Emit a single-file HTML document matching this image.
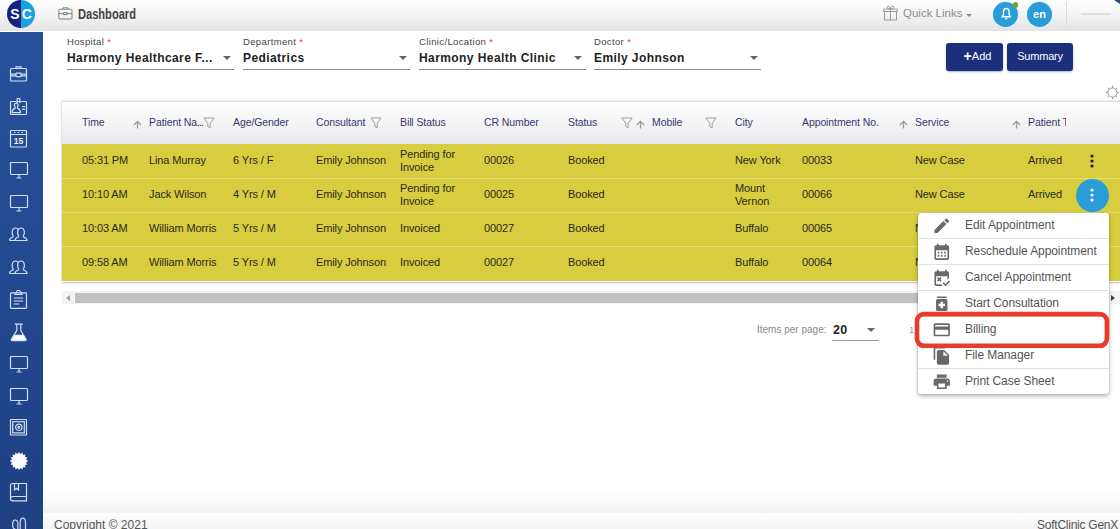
<!DOCTYPE html>
<html lang="en">
<head>
<meta charset="utf-8">
<title>Dashboard</title>
<style>
*{box-sizing:border-box;margin:0;padding:0}
html,body{width:1120px;height:529px;overflow:hidden;background:#fff;font-family:"Liberation Sans",sans-serif;color:#222}
.abs{position:absolute}
#hdr{left:0;top:0;width:1120px;height:31px;background:linear-gradient(#ffffff 0%,#f4f4f4 45%,#e4e4e4 100%)}
#side{left:0;top:32px;width:43px;height:497px;background:linear-gradient(#26509b,#1f4184)}
#logo{left:7px;top:0;width:28px;height:28px;border-radius:50%;background:linear-gradient(90deg,#17227f 0,#17227f 50%,#17a4dc 50%,#17a4dc 100%);color:#fff;font-weight:bold;font-size:14px;line-height:28px;text-align:center;letter-spacing:2.2px;padding-left:2.5px}
#title{left:78px;top:5px;font-size:14.5px;font-weight:bold;color:#444;transform:scaleX(.765);transform-origin:0 50%;white-space:nowrap;line-height:18px}
.ql{left:903px;top:5px;font-size:11.5px;color:#8c8c8c;line-height:16px;white-space:nowrap}
.circ{width:25px;height:25px;border-radius:50%;background:#2a9dd8;box-shadow:0 0 0 1px #d8f0fa}
.lbl{font-size:9.5px;letter-spacing:.36px;color:#444;line-height:12px;white-space:nowrap}
.lbl i{color:#d2453b;font-style:normal}
.val{font-size:12px;font-weight:bold;color:#1e1e1e;line-height:16px;white-space:nowrap;letter-spacing:.42px}
.ul{height:1px;background:#8a8a8a}
.car{width:0;height:0;border-left:4px solid transparent;border-right:4px solid transparent;border-top:4px solid #666}
.btn{top:43px;height:28px;border-radius:3px;background:#1b2f7c;color:#fff;font-size:11px;line-height:26px;text-align:center;box-shadow:0 1px 2px rgba(0,0,0,.3)}
#tbl{left:62px;top:101px;width:1058px;height:181px;background:#fff;box-shadow:0 1px 2px rgba(0,0,0,.22),0 0 1px rgba(0,0,0,.25)}
#th{left:62px;top:101px;width:1058px;height:43px;border-top:1px solid #dedede;background:linear-gradient(#fefefe 0%,#f5f5f7 45%,#e9e9ed 100%)}
.h{top:116px;font-size:10.5px;letter-spacing:-.1px;color:#36386f;line-height:12px;white-space:nowrap}
.row{left:62px;width:1058px;height:34px;background:#d7cd3f;border-top:1px solid #e4dd7e}
.c{font-size:11px;letter-spacing:-.12px;color:#2a2a20;line-height:13px;white-space:nowrap}
#menu{left:918px;top:213px;width:191px;height:181px;background:#fff;border-radius:3px;box-shadow:0 2px 4px rgba(0,0,0,.3),0 0 2px rgba(0,0,0,.2)}
.mi{left:0;width:191px;height:26px;border-bottom:1px solid #e2e2e2}
.mi span{position:absolute;left:47px;top:5px;font-size:12px;letter-spacing:-.08px;color:#555;line-height:14px;white-space:nowrap}
.mi svg{position:absolute;left:13.7px;top:2.5px;width:19.5px;height:19.5px;fill:#696969}
#ftr{left:43px;top:513px;width:1077px;height:16px;background:linear-gradient(#fdfdfd,#f4f4f4)}
#fsh{left:43px;top:490px;width:1077px;height:23px;background:linear-gradient(rgba(0,0,0,0),rgba(0,0,0,.02) 50%,rgba(0,0,0,.055))}
.ft{top:518px;font-size:12px;color:#555;line-height:14px;white-space:nowrap}
.sb{fill:none;stroke:#d3def2;stroke-width:1.2;overflow:visible}
</style>
</head>
<body>
<div id="hdr" class="abs"></div>
<div id="side" class="abs"></div>
<div id="logo" class="abs">SC</div>

<!-- sidebar icons -->
<svg class="abs sb" style="left:9px;top:65px;width:19px;height:18px" viewBox="0 0 19 18" ><rect x="1.500" y="3.500" width="16" height="12.500" rx="1"/><path d="M7 3.500V1.800h5v1.700M1.500 9.200h5.500M12 9.200h5.500M1.500 10.800h5.500M12 10.800h5.500"/><rect x="7" y="8.200" width="5" height="3.400" rx=".5"/></svg>
<svg class="abs sb" style="left:9px;top:97px;width:19px;height:20px" viewBox="0 0 19 20" ><rect x="1.500" y="4.500" width="16" height="13" rx=".8"/><path d="M8.200 6V1.500h2.600V6M13 9.500h3M13 12.200h3"/><path transform="translate(-2.400,-6.200) scale(1.380)" stroke-width=".9" d="M4 15.800c0-2 .8-2.600 2-3 .3-.2.300-.8 0-1.200-.6-.7-.6-2.600 1-2.600s1.600 1.900 1 2.600c-.3.400-.3 1 0 1.200 1.200.4 2 1 2 3z"/></svg>
<svg class="abs sb" style="left:9px;top:129px;width:19px;height:20px" viewBox="0 0 19 20" ><rect x="1.500" y="1.500" width="16" height="16.500" rx=".8"/><path d="M1.500 5.500h16M5 3.500h1.500M8.800 3.500h1.500M12.500 3.500H14" /><text x="9.500" y="15" text-anchor="middle" font-family="Liberation Sans, sans-serif" font-weight="bold" font-size="8.500" fill="#e6ecf7" stroke="none">15</text></svg>
<svg class="abs sb" style="left:9px;top:161px;width:20px;height:19px" viewBox="0 0 20 19" ><rect x="1.500" y="1.500" width="17" height="12" rx="1"/><path d="M10 13.500v3.300M7.500 17h5"/></svg>
<svg class="abs sb" style="left:9px;top:194px;width:20px;height:19px" viewBox="0 0 20 19" ><rect x="1.500" y="1.500" width="17" height="12" rx="1"/><path d="M10 13.500v3.300M7.500 17h5"/></svg>
<svg class="abs sb" style="left:9px;top:355px;width:20px;height:19px" viewBox="0 0 20 19" ><rect x="1.500" y="1.500" width="17" height="12" rx="1"/><path d="M10 13.500v3.300M7.500 17h5"/></svg>
<svg class="abs sb" style="left:9px;top:387px;width:20px;height:19px" viewBox="0 0 20 19" ><rect x="1.500" y="1.500" width="17" height="12" rx="1"/><path d="M10 13.500v3.300M7.500 17h5"/></svg>
<svg class="abs sb" style="left:8px;top:226px;width:21px;height:17px" viewBox="0 0 21 17" ><path d="M1.500 14.500c0-2.200 1.400-2.800 3.300-3.500.5-.3.500-1.100.1-1.600C4 8.200 4 6.800 4.200 5.600 4.500 3.500 5.600 2 7.500 2c1.300 0 2.200.7 2.700 1.700"/><path d="M7 14.500c0-2.200 1.400-2.800 3.300-3.500.5-.3.500-1.100.1-1.600-.9-1.200-.9-2.600-.7-3.800.3-2.100 1.400-3.600 3.300-3.600s3 1.500 3.300 3.600c.2 1.200.2 2.600-.7 3.800-.4.5-.4 1.300.100 1.600 1.900.7 3.300 1.300 3.300 3.500zM1.500 14.500H7"/></svg>
<svg class="abs sb" style="left:8px;top:259px;width:21px;height:17px" viewBox="0 0 21 17" ><path d="M1.500 14.500c0-2.200 1.400-2.800 3.300-3.500.5-.3.500-1.100.1-1.600C4 8.200 4 6.800 4.200 5.600 4.500 3.500 5.600 2 7.500 2c1.300 0 2.200.7 2.700 1.700"/><path d="M7 14.500c0-2.200 1.400-2.800 3.300-3.500.5-.3.500-1.100.1-1.600-.9-1.200-.9-2.600-.7-3.800.3-2.100 1.400-3.600 3.300-3.600s3 1.500 3.300 3.600c.2 1.200.2 2.600-.7 3.800-.4.5-.4 1.300.100 1.600 1.900.7 3.300 1.300 3.300 3.500zM1.500 14.500H7"/></svg>
<svg class="abs sb" style="left:9px;top:289px;width:19px;height:21px" viewBox="0 0 19 21" ><rect x="1.500" y="3.800" width="16" height="15.500" rx=".8"/><path d="M6 5.500L8.500 1.500h2L13 5.500zM4.800 9h9.400M4.800 12h9.400M4.800 15h5.500"/></svg>
<svg class="abs sb" style="left:9px;top:322px;width:20px;height:21px" viewBox="0 0 20 21" stroke-width="2" stroke="#fbfcff"><path d="M5.800 2.200h8M7.800 2.200v6.300L2.400 17c-.5.900 0 1.700 1 1.700h12.500c1 0 1.500-.8 1-1.700L11.800 8.500V2.200"/><path d="M5.500 12.700h8.600l3.300 5.300H2.400z" fill="#fbfcff" stroke="none"/></svg>
<svg class="abs sb" style="left:9px;top:418px;width:19px;height:19px" viewBox="0 0 19 19" ><rect x="1.500" y="1.500" width="16" height="15.500" rx=".6"/><rect x="3.700" y="3.700" width="11.600" height="11.200"/><circle cx="9.800" cy="9.300" r="3.200"/><circle cx="9.800" cy="9.300" r="1"/><path d="M3.700 6.500v1.600M3.700 10.500v1.600"/></svg>
<svg class="abs sb" style="left:8.600px;top:451.300px;width:20px;height:20px" viewBox="0 0 20 20" ><polygon points="10.00,19.10 8.60,17.06 6.52,18.41 6.00,15.99 3.57,16.43 4.01,14.00 1.59,13.48 2.94,11.40 0.90,10.00 2.94,8.60 1.59,6.52 4.01,6.00 3.57,3.57 6.00,4.01 6.52,1.59 8.60,2.94 10.00,0.90 11.40,2.94 13.48,1.59 14.00,4.01 16.43,3.57 15.99,6.00 18.41,6.52 17.06,8.60 19.10,10.00 17.06,11.40 18.41,13.48 15.99,14.00 16.43,16.43 14.00,15.99 13.48,18.41 11.40,17.06" fill="#fbfcff" stroke="none"/></svg>
<svg class="abs sb" style="left:9px;top:482px;width:19px;height:20px" viewBox="0 0 19 20" ><path d="M17.500 14.500H4c-1.400 0-2.500 1-2.500 2.200S2.600 18.800 4 18.800h13.500V1.500H3.500c-1.100 0-2 .9-2 2v13.200M5.500 1.500v6.500l2-1.800 2 1.800V1.500"/></svg>
<svg class="abs sb" style="left:11px;top:516px;width:16px;height:14px" viewBox="0 0 16 14"><path d="M6.800 13V7.200c0-1.800-1-3.200-2.500-3.200S1.600 5.600 1.600 8.500s1.100 4.500 2.700 4.500M9.200 13V7c0-2.700 1-4.800 2.600-4.800s2.700 2.100 2.700 4.800v6"/></svg>

<!-- header -->
<svg class="abs" style="left:58px;top:7px;width:15px;height:13px" viewBox="0 0 15 13" fill="none" stroke="#808080" stroke-width="1"><rect x=".8" y="2.2" width="13.2" height="9.8" rx="1.2"/><path d="M5 2.2V.8h5v1.4M.8 6.6h5M9 6.6h5"/><rect x="5.8" y="5.6" width="3.2" height="2" /></svg>
<div id="title" class="abs">Dashboard</div>

<svg class="abs" style="left:883px;top:5px;width:15px;height:16px" viewBox="0 0 15 16" fill="none" stroke="#929292" stroke-width=".9"><rect x="1.5" y="6.5" width="12" height="8.5"/><rect x=".8" y="4" width="13.4" height="2.5"/><path d="M7.5 4v11M7.500 4C5 4 3.500 2.800 4.300 1.600 5.200.5 7 1.500 7.500 4zM7.500 4c2.500 0 4-1.200 3.200-2.400C9.800.5 8 1.500 7.500 4z"/></svg>
<div class="abs ql">Quick Links</div>
<div class="abs" style="left:966px;top:14px;width:0;height:0;border-left:3.5px solid transparent;border-right:3.5px solid transparent;border-top:3.5px solid #888"></div>
<div class="abs circ" style="left:993px;top:2px"></div>
<svg class="abs" style="left:1000.7px;top:6.800px;width:10.600px;height:13.600px" viewBox="0 0 12 14" preserveAspectRatio="none" fill="none" stroke="#fff" stroke-width="1.5"><path d="M6 1.600C3.800 1.600 2.800 3.400 2.800 5.400V8L1.500 10h9L9.200 8V5.400C9.200 3.400 8.200 1.600 6 1.600z"/><path d="M4.800 12h2.400" stroke-width="1.400"/></svg>
<div class="abs" style="left:1012.8px;top:2.4px;width:5.2px;height:5.2px;border-radius:50%;background:#7a9a3c"></div>
<div class="abs circ" style="left:1027px;top:2px;color:#fff;font-size:11px;font-weight:bold;text-align:center;line-height:24px">en</div>
<div class="abs" style="left:1066px;top:2px;width:1px;height:25px;background:#dcdcdc"></div>
<div class="abs" style="left:1081px;top:13px;width:30px;height:2px;background:#dedede"></div>
<div class="abs" style="left:1114px;top:0;width:0;height:0;border-left:6px solid transparent;border-top:4px solid #27497f"></div>

<!-- filters -->
<div class="abs lbl" style="left:67px;top:36px">Hospital <i>*</i></div>
<div class="abs val" style="left:67px;top:50px">Harmony Healthcare F...</div>
<div class="abs car" style="left:223px;top:55.5px"></div>
<div class="abs ul" style="left:67px;top:69px;width:167px"></div>

<div class="abs lbl" style="left:243px;top:36px">Department <i>*</i></div>
<div class="abs val" style="left:243px;top:50px">Pediatrics</div>
<div class="abs car" style="left:399px;top:55.5px"></div>
<div class="abs ul" style="left:243px;top:69px;width:167px"></div>

<div class="abs lbl" style="left:419px;top:36px">Clinic/Location <i>*</i></div>
<div class="abs val" style="left:419px;top:50px">Harmony Health Clinic</div>
<div class="abs car" style="left:574px;top:55.5px"></div>
<div class="abs ul" style="left:419px;top:69px;width:167px"></div>

<div class="abs lbl" style="left:594px;top:36px">Doctor <i>*</i></div>
<div class="abs val" style="left:594px;top:50px">Emily Johnson</div>
<div class="abs car" style="left:750px;top:55.5px"></div>
<div class="abs ul" style="left:594px;top:69px;width:167px"></div>

<div class="abs btn" style="left:946px;width:57px;padding-left:6px"><b style="font-size:14px;line-height:20px;vertical-align:-1px">+</b>Add</div>
<div class="abs btn" style="left:1007px;width:66px;letter-spacing:-.2px">Summary</div>

<!-- gear -->
<svg class="abs" style="left:1105px;top:85px;width:15px;height:15px" viewBox="0 0 15 15" fill="none" stroke="#9a9a9a" stroke-width="1"><circle cx="7.5" cy="7.5" r="4.600"/><path d="M7.500.8v2M7.500 12.200v2M.8 7.500h2M12.200 7.500h2M2.800 2.800l1.400 1.400M10.800 10.800l1.400 1.400M2.800 12.200l1.400-1.400M10.800 4.200l1.400-1.400"/></svg>

<!-- table -->
<div id="tbl" class="abs"></div>
<div id="th" class="abs"></div>
<div class="abs h" style="left:82px">Time</div>
<div class="abs h" style="left:149px">Patient Na<span style="letter-spacing:-.9px">...</span></div>
<div class="abs h" style="left:233px">Age/Gender</div>
<div class="abs h" style="left:316px">Consultant</div>
<div class="abs h" style="left:400px">Bill Status</div>
<div class="abs h" style="left:484px">CR Number</div>
<div class="abs h" style="left:568px">Status</div>
<div class="abs h" style="left:652px">Mobile</div>
<div class="abs h" style="left:735px">City</div>
<div class="abs h" style="left:802px">Appointment No.</div>
<div class="abs h" style="left:915px">Service</div>
<div class="abs h" style="left:1028px;width:38px;overflow:hidden">Patient Type</div>

<div class="abs row" style="top:144px;border-top:0"></div>
<div class="abs row" style="top:178px"></div>
<div class="abs row" style="top:212px"></div>
<div class="abs row" style="top:246px;height:35px"></div>

<div class="abs c" style="left:82px;top:154px">05:31 PM</div>
<div class="abs c" style="left:149px;top:154px">Lina Murray</div>
<div class="abs c" style="left:233px;top:154px">6 Yrs / F</div>
<div class="abs c" style="left:316px;top:154px">Emily Johnson</div>
<div class="abs c" style="left:400px;top:148px">Pending for<br>Invoice</div>
<div class="abs c" style="left:484px;top:154px">00026</div>
<div class="abs c" style="left:568px;top:154px">Booked</div>
<div class="abs c" style="left:735px;top:154px">New York</div>
<div class="abs c" style="left:802px;top:154px">00033</div>
<div class="abs c" style="left:915px;top:154px">New Case</div>
<div class="abs c" style="left:1028px;top:154px">Arrived</div>
<div class="abs c" style="left:82px;top:188px">10:10 AM</div>
<div class="abs c" style="left:149px;top:188px">Jack Wilson</div>
<div class="abs c" style="left:233px;top:188px">4 Yrs / M</div>
<div class="abs c" style="left:316px;top:188px">Emily Johnson</div>
<div class="abs c" style="left:400px;top:182px">Pending for<br>Invoice</div>
<div class="abs c" style="left:484px;top:188px">00025</div>
<div class="abs c" style="left:568px;top:188px">Booked</div>
<div class="abs c" style="left:735px;top:182px">Mount<br>Vernon</div>
<div class="abs c" style="left:802px;top:188px">00066</div>
<div class="abs c" style="left:915px;top:188px">New Case</div>
<div class="abs c" style="left:1028px;top:188px">Arrived</div>
<div class="abs c" style="left:82px;top:222px">10:03 AM</div>
<div class="abs c" style="left:149px;top:222px">William Morris</div>
<div class="abs c" style="left:233px;top:222px">5 Yrs / M</div>
<div class="abs c" style="left:316px;top:222px">Emily Johnson</div>
<div class="abs c" style="left:400px;top:222px">Invoiced</div>
<div class="abs c" style="left:484px;top:222px">00027</div>
<div class="abs c" style="left:568px;top:222px">Booked</div>
<div class="abs c" style="left:735px;top:222px">Buffalo</div>
<div class="abs c" style="left:802px;top:222px">00065</div>
<div class="abs c" style="left:915px;top:222px">New Case</div>
<div class="abs c" style="left:1028px;top:222px">Arrived</div>
<div class="abs c" style="left:82px;top:256px">09:58 AM</div>
<div class="abs c" style="left:149px;top:256px">William Morris</div>
<div class="abs c" style="left:233px;top:256px">5 Yrs / M</div>
<div class="abs c" style="left:316px;top:256px">Emily Johnson</div>
<div class="abs c" style="left:400px;top:256px">Invoiced</div>
<div class="abs c" style="left:484px;top:256px">00027</div>
<div class="abs c" style="left:568px;top:256px">Booked</div>
<div class="abs c" style="left:735px;top:256px">Buffalo</div>
<div class="abs c" style="left:802px;top:256px">00064</div>
<div class="abs c" style="left:915px;top:256px">New Case</div>
<div class="abs c" style="left:1028px;top:256px">Arrived</div>
<svg class="abs" style="left:132.5px;top:120px;width:9px;height:9px" viewBox="0 0 9 9" fill="none" stroke="#999" stroke-width="1.3"><path d="M4.500 8.600V1.400M.9 5l3.600-3.600L8.100 5"/></svg>
<svg class="abs" style="left:635.5px;top:120px;width:9px;height:9px" viewBox="0 0 9 9" fill="none" stroke="#999" stroke-width="1.3"><path d="M4.500 8.600V1.400M.9 5l3.600-3.600L8.100 5"/></svg>
<svg class="abs" style="left:898.5px;top:120px;width:9px;height:9px" viewBox="0 0 9 9" fill="none" stroke="#999" stroke-width="1.3"><path d="M4.500 8.600V1.400M.9 5l3.600-3.600L8.100 5"/></svg>
<svg class="abs" style="left:1011.5px;top:120px;width:9px;height:9px" viewBox="0 0 9 9" fill="none" stroke="#999" stroke-width="1.3"><path d="M4.500 8.600V1.400M.9 5l3.600-3.600L8.100 5"/></svg>
<svg class="abs" style="left:203px;top:117px;width:12px;height:12px" viewBox="0 0 12 12" fill="none" stroke="#a0a0a0" stroke-width="1"><path d="M.8 1h10.400L7.200 6.200v4.600L4.800 9.600V6.200z"/></svg>
<svg class="abs" style="left:370px;top:117px;width:12px;height:12px" viewBox="0 0 12 12" fill="none" stroke="#a0a0a0" stroke-width="1"><path d="M.8 1h10.400L7.200 6.200v4.600L4.800 9.600V6.200z"/></svg>
<svg class="abs" style="left:621px;top:117px;width:12px;height:12px" viewBox="0 0 12 12" fill="none" stroke="#a0a0a0" stroke-width="1"><path d="M.8 1h10.400L7.200 6.200v4.600L4.800 9.600V6.200z"/></svg>
<svg class="abs" style="left:705px;top:117px;width:12px;height:12px" viewBox="0 0 12 12" fill="none" stroke="#a0a0a0" stroke-width="1"><path d="M.8 1h10.400L7.200 6.200v4.600L4.800 9.600V6.200z"/></svg>
<svg class="abs" style="left:1088px;top:153px;width:8px;height:16px" viewBox="0 0 8 16" fill="#1e1e1e"><circle cx="4" cy="3" r="1.600"/><circle cx="4" cy="8" r="1.600"/><circle cx="4" cy="13" r="1.600"/></svg>
<div class="abs" style="left:1075.5px;top:178.5px;width:33px;height:33px;border-radius:50%;background:#2a9dd8"></div>
<svg class="abs" style="left:1088px;top:187px;width:8px;height:16px" viewBox="0 0 8 16" fill="#fff"><circle cx="4" cy="3" r="1.600"/><circle cx="4" cy="8" r="1.600"/><circle cx="4" cy="13" r="1.600"/></svg>

<!-- scrollbar -->
<div class="abs" style="left:62px;top:291px;width:1058px;height:13px;background:#f3f3f3"></div>
<div class="abs" style="left:75px;top:293px;width:1033px;height:10px;background:#c1c1c1"></div>

<div class="abs" style="left:66px;top:295px;width:0;height:0;border-top:3px solid transparent;border-bottom:3px solid transparent;border-right:4px solid #a0a0a0"></div>
<div class="abs" style="left:1111px;top:295px;width:0;height:0;border-top:3px solid transparent;border-bottom:3px solid transparent;border-left:4px solid #444"></div>

<!-- paginator -->
<div class="abs" style="left:757px;top:324px;font-size:10px;color:#8a8a8a;line-height:12px;white-space:nowrap">Items per page:</div>
<div class="abs" style="left:833px;top:322px;font-size:12.5px;letter-spacing:.4px;font-weight:bold;color:#222;line-height:16px">20</div>
<div class="abs car" style="left:867px;top:328px"></div>
<div class="abs ul" style="left:832px;top:340px;width:47px;background:#9a9a9a"></div>
<div class="abs" style="left:909px;top:324px;font-size:9.5px;color:#999;line-height:12px">1</div>

<!-- footer -->
<div id="fsh" class="abs"></div>
<div id="ftr" class="abs"></div>
<div class="abs ft" style="left:54px">Copyright © 2021</div>
<div class="abs ft" style="right:2px;letter-spacing:-.25px">SoftClinic GenX</div>

<!-- menu -->
<div id="menu" class="abs">
<div class="abs mi" style="top:0"><svg viewBox="0 0 24 24"><path d="M3 17.250V21h3.750L17.810 9.940l-3.750-3.750L3 17.250zM20.710 7.040c.390-.390.390-1.020 0-1.410l-2.340-2.340c-.390-.390-1.020-.390-1.410 0l-1.830 1.830 3.750 3.750 1.830-1.830z"/></svg><span>Edit Appointment</span></div>
<div class="abs mi" style="top:26px"><svg viewBox="0 0 24 24"><path d="M19 4h-1V2h-2v2H8V2H6v2H5c-1.110 0-1.990.9-1.990 2L3 20c0 1.100.890 2 2 2h14c1.100 0 2-.9 2-2V6c0-1.100-.9-2-2-2zm0 16H5V10h14v10zM9 14H7v-2h2v2zm4 0h-2v-2h2v2zm4 0h-2v-2h2v2zm-8 4H7v-2h2v2zm4 0h-2v-2h2v2zm4 0h-2v-2h2v2z"/></svg><span>Reschedule Appointment</span></div>
<div class="abs mi" style="top:52px"><svg viewBox="0 0 24 24"><path d="M11.210 20H5V10h14v4.380l2-2V6c0-1.100-.9-2-2-2h-1V2h-2v2H8V2H6v2H5c-1.110 0-1.990.9-1.990 2L3 20c0 1.100.890 2 2 2h8.210l-2-2zM16.540 22.500L13 18.960l1.410-1.410 2.120 2.120 4.240-4.240 1.410 1.410-5.640 5.660zM10.410 14l1.420 1.410-1.420 1.420L9 15.410l-1.410 1.420-1.420-1.420L7.590 14l-1.420-1.410 1.420-1.420L9 12.590l1.410-1.420 1.420 1.420L10.410 14z"/></svg><span>Cancel Appointment</span></div>
<div class="abs mi" style="top:78px"><svg viewBox="0 0 24 24"><path d="M6 3h12v2H6zM17 6H7c-1.100 0-2 .9-2 2v11c0 1.100.9 2 2 2h10c1.100 0 2-.9 2-2V8c0-1.100-.9-2-2-2zm-1 9h-2.500v2.500h-3V15H8v-3h2.500V9.500h3V12H16v3z"/></svg><span>Start Consultation</span></div>
<div class="abs mi" style="top:104px;border-bottom-color:#fff"><svg viewBox="0 0 24 24"><path d="M20 4H4c-1.110 0-1.990.890-1.990 2L2 18c0 1.110.890 2 2 2h16c1.110 0 2-.890 2-2V6c0-1.110-.890-2-2-2zm0 14H4v-6h16v6zm0-10H4V6h16v2z"/></svg><span>Billing</span></div>
<div class="abs mi" style="top:130px"><svg viewBox="0 0 24 24"><path d="M16 1H4c-1.100 0-2 .9-2 2v14h2V3h12V1zm-1 4l6 6v10c0 1.100-.9 2-2 2H7.990C6.890 23 6 22.100 6 21l.010-14c0-1.100.890-2 1.990-2h7zm-1 7h5.500L14 6.500V12z"/></svg><span>File Manager</span></div>
<div class="abs mi" style="top:156px;border-bottom:0"><svg viewBox="0 0 24 24"><path d="M19 8H5c-1.660 0-3 1.340-3 3v6h4v4h12v-4h4v-6c0-1.660-1.340-3-3-3zm-3 11H8v-5h8v5zm3-7c-.550 0-1-.450-1-1s.450-1 1-1 1 .450 1 1-.450 1-1 1zm-1-9H6v4h12V3z"/></svg><span>Print Case Sheet</span></div>
</div>
<svg class="abs" style="left:910px;top:308px;width:204px;height:44px" viewBox="0 0 204 44"><rect x="7" y="6.100" width="189.900" height="31.700" rx="7" fill="none" stroke="#e93a2e" stroke-width="4.600"/></svg>
</body>
</html>
